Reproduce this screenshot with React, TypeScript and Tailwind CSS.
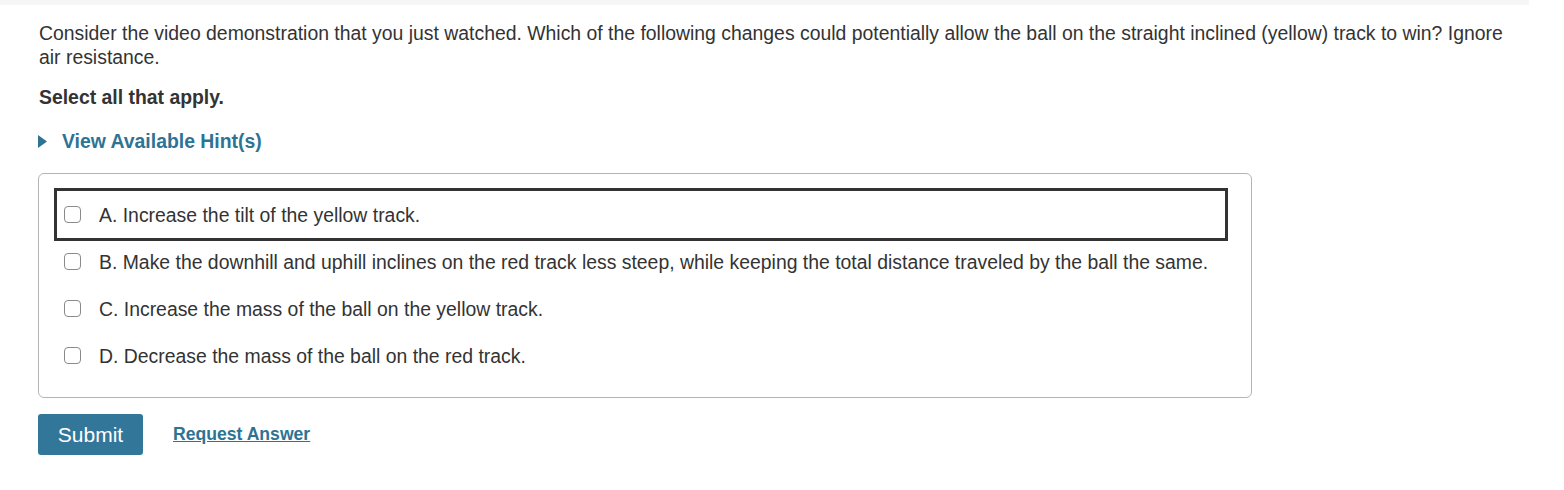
import React from 'react';

const options = [
  'A. Increase the tilt of the yellow track.',
  'B. Make the downhill and uphill inclines on the red track less steep, while keeping the total distance traveled by the ball the same.',
  'C. Increase the mass of the ball on the yellow track.',
  'D. Decrease the mass of the ball on the red track.',
];

export default function App() {
  return (
    <div className="min-h-[490px] w-full bg-white text-[#333333]" style={{ fontFamily: '"Liberation Sans", Arial, sans-serif' }}>
      <div className="h-[5px] w-[1529px] bg-[#f6f6f6]" />
      <div className="pl-[39px] pt-[16px]">
        <p className="w-[1480px] text-[19.4px] leading-[24px]">
          Consider the video demonstration that you just watched. Which of the following changes could potentially allow the ball on the straight inclined (yellow) track to win? Ignore air resistance.
        </p>
        <p className="mt-[16px] text-[19.4px] font-bold leading-[24px]">Select all that apply.</p>
        <div className="mt-[20px] flex h-[24px] items-center">
          <svg width="9" height="13" viewBox="0 0 9 13" className="-ml-[1px]">
            <path d="M0 0 L9 6.5 L0 13 Z" fill="#2d7394" />
          </svg>
          <span className="ml-[15px] text-[19.4px] font-bold leading-[24px] text-[#2d7394]">View Available Hint(s)</span>
        </div>
        <div className="-ml-[1px] mt-[20px] w-[1214px] rounded-[6px] border border-[#b5b5b5] pb-[18px] pl-[18px] pt-[17px]">
          {options.map((opt, i) => (
            <div
              key={i}
              className={`flex h-[47px] w-[1168px] items-center ${i === 0 ? 'outline-[3px] outline-solid outline-[#333333]' : ''}`}
            >
              <span className="ml-[7px] h-[17px] w-[17px] shrink-0 rounded-[4px] border-[1.5px] border-[#8a8a8a] bg-white" />
              <span className="ml-[18px] whitespace-nowrap text-[19.4px] leading-[24px]">{opt}</span>
            </div>
          ))}
        </div>
        <div className="-ml-[1px] mt-[16px] flex items-center">
          <button className="h-[41px] w-[105px] rounded-[3px] bg-[#32779a] text-[21px] text-white">Submit</button>
          <a className="ml-[30px] text-[17.6px] font-bold text-[#2d7394] underline">Request Answer</a>
        </div>
      </div>
    </div>
  );
}
